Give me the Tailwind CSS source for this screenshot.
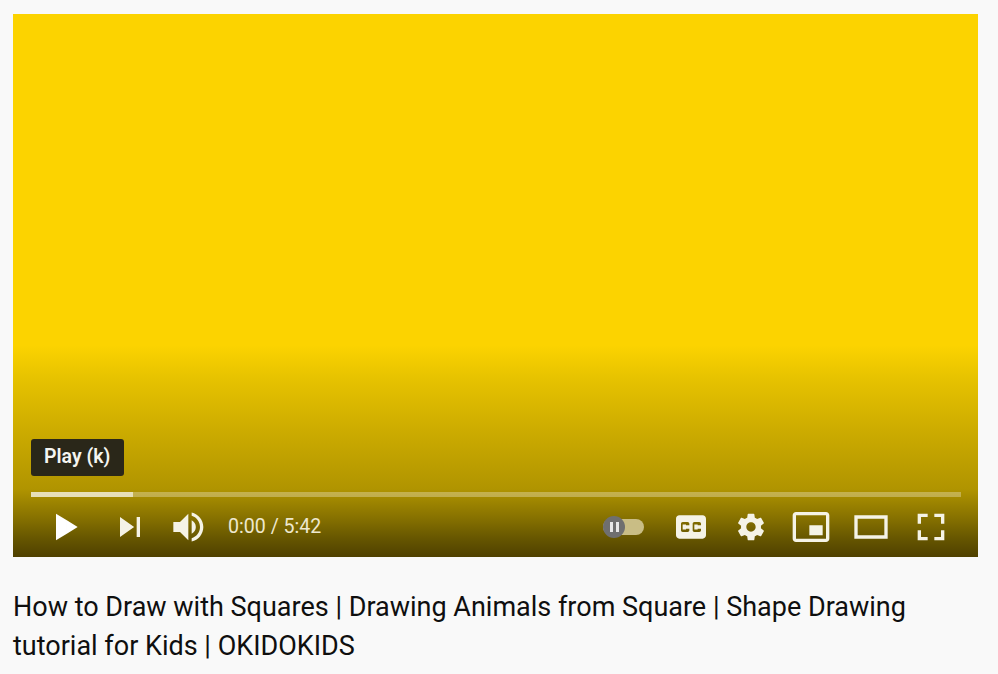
<!DOCTYPE html>
<html lang="en">
<head>
  <meta charset="UTF-8" />
  <title>How to Draw with Squares</title>
  <script src="https://cdn.jsdelivr.net/npm/@tailwindcss/browser@4"></script>
</head>
<body class="bg-[#f9f9f9] text-[#0f0f0f] font-['Roboto',sans-serif] overflow-hidden">
  <main class="w-[998px] h-[674px] pt-[14px] px-[13px]">

    <!-- player -->
    <div class="relative w-[965px] h-[543px] bg-[#fcd300]">
      <div class="absolute inset-x-0 bottom-0 h-[212px] bg-[linear-gradient(to_bottom,#fcd300_0%,#e6c200_16%,#cdac00_40%,#b09400_68%,#857000_82%,#645400_92%,#4f4000_100%)]"></div>

      <div class="absolute left-[18px] top-[425px] h-[37px] w-[93px] pl-[13px] pb-[1px] rounded-[3px] bg-[#2a2719] text-[#f5f5f0] text-[19.5px] font-semibold flex items-center">Play (k)</div>

      <div class="absolute left-[18px] right-[17px] bottom-0">
        <div class="h-[5px] bg-white/30">
          <div class="h-full w-[102px] bg-white/60"></div>
        </div>
        <div class="h-[60px] flex items-center justify-between text-[#f5f3e6]">
          <div class="flex items-center pl-[5px]">
            <svg class="w-[60px] h-[60px] fill-white" viewBox="0 0 36 36"><path d="M12,26 18.5,22 18.5,14 12,10 z M18.5,22 25,18 25,18 18.5,14 z" /></svg>
            <svg class="w-[60px] h-[60px] ml-1 fill-current" viewBox="0 0 36 36"><path d="M12,24 20.5,18 12,12 V24 z M22,12 v12 h2 V12 h-2 z" /></svg>
            <svg class="w-[60px] h-[60px] fill-current" viewBox="0 0 36 36"><path d="M8,21 L12,21 L17,26 L17,10 L12,15 L8,15 L8,21 Z M19,14 L19,22 C20.48,21.32 21.5,19.77 21.5,18 C21.5,16.26 20.48,14.74 19,14 ZM19,11.29 C21.89,12.15 24,14.83 24,18 C24,21.17 21.89,23.85 19,24.71 L19,26.77 C23.01,25.86 26,22.28 26,18 C26,13.72 23.01,10.14 19,9.23 L19,11.29 Z" /></svg>
            <span class="ml-[8px] text-[19.6px] text-[#eee8cf]">0:00 / 5:42</span>
          </div>
          <div class="flex items-center">
            <!-- autoplay toggle -->
            <div class="relative w-[41px] h-[16px] mr-[17px] rounded-full bg-[#c9bd85]">
              <div class="absolute left-0 -top-[3px] w-[22px] h-[22px] rounded-full bg-[#6f6f6f] flex items-center justify-center gap-[3px]">
                <span class="w-[3px] h-[10px] bg-[#e8e8e8]"></span>
                <span class="w-[3px] h-[10px] bg-[#e8e8e8]"></span>
              </div>
            </div>
            <svg class="w-[60px] h-[60px] fill-current" fill-rule="evenodd" viewBox="0 0 36 36"><path d="M11,11 C9.89,11 9,11.9 9,13 L9,23 C9,24.1 9.89,25 11,25 L25,25 C26.1,25 27,24.1 27,23 L27,13 C27,11.9 26.1,11 25,11 L11,11 Z M17,17 L15,17 L15,16.5 L13,16.5 L13,19.5 L15,19.5 L15,19 L17,19 L17,20 C17,20.55 16.55,21 16,21 L13,21 C12.45,21 12,20.55 12,20 L12,16 C12,15.45 12.45,15 13,15 L16,15 C16.55,15 17,15.45 17,16 L17,17 Z M24,17 L22,17 L22,16.5 L20,16.5 L20,19.5 L22,19.5 L22,19 L24,19 L24,20 C24,20.55 23.55,21 23,21 L20,21 C19.45,21 19,20.55 19,20 L19,16 C19,15.45 19.45,15 20,15 L23,15 C23.55,15 24,15.45 24,16 L24,17 Z" /></svg>
            <svg class="w-[60px] h-[60px] fill-current" viewBox="0 0 36 36"><path d="m23.94,18.78 c.03,-0.25 .05,-0.51 .05,-0.78 0,-0.27 -0.02,-0.52 -0.05,-0.78 l1.68,-1.32 c.15,-0.12 .19,-0.33 .09,-0.51 l-1.6,-2.76 c-0.09,-0.17 -0.31,-0.24 -0.48,-0.17 l-1.99,.8 c-0.41,-0.32 -0.86,-0.58 -1.35,-0.78 l-0.30,-2.12 c-0.02,-0.19 -0.19,-0.33 -0.39,-0.33 l-3.2,0 c-0.2,0 -0.36,.14 -0.39,.33 l-0.30,2.12 c-0.48,.2 -0.93,.47 -1.35,.78 l-1.99,-0.8 c-0.18,-0.07 -0.39,0 -0.48,.17 l-1.6,2.76 c-0.10,.17 -0.05,.39 .09,.51 l1.68,1.32 c-0.03,.25 -0.05,.52 -0.05,.78 0,.26 .02,.52 .05,.78 l-1.68,1.32 c-0.15,.12 -0.19,.33 -0.09,.51 l1.6,2.76 c.09,.17 .31,.24 .48,.17 l1.99,-0.8 c.41,.32 .86,.58 1.35,.78 l.30,2.12 c.02,.19 .19,.33 .39,.33 l3.2,0 c.2,0 .36,-0.14 .39,-0.33 l.30,-2.12 c.48,-0.2 .93,-0.47 1.35,-0.78 l1.99,.8 c.18,.07 .39,0 .48,-0.17 l1.6,-2.76 c.09,-0.17 .05,-0.39 -0.09,-0.51 l-1.68,-1.32 0,0 z m-5.94,2.01 c-1.54,0 -2.8,-1.25 -2.8,-2.8 0,-1.54 1.25,-2.8 2.8,-2.8 1.54,0 2.8,1.25 2.8,2.8 0,1.54 -1.25,2.8 -2.8,2.8 l0,0 z" /></svg>
            <svg class="w-[60px] h-[60px] fill-current" viewBox="0 0 36 36"><path d="M25,17 L17,17 L17,23 L25,23 L25,17 L25,17 Z M29,25 L29,10.98 C29,9.88 28.1,9 27,9 L9,9 C7.9,9 7,9.88 7,10.98 L7,25 C7,26.1 7.9,27 9,27 L27,27 C28.1,27 29,26.1 29,25 L29,25 Z M27,25.02 L9,25.02 L9,10.97 L27,10.97 L27,25.02 L27,25.02 Z" /></svg>
            <svg class="w-[60px] h-[60px] fill-current" fill-rule="evenodd" viewBox="0 0 36 36"><path d="m28,11 0,14 -20,0 0,-14 z m-18,2 16,0 0,10 -16,0 0,-10 z" /></svg>
            <svg class="w-[60px] h-[60px] fill-current" viewBox="0 0 36 36"><path d="m10,16 2,0 0,-4 4,0 0,-2 L10,10 l0,6 0,0 z" /><path d="m20,10 0,2 4,0 0,4 2,0 L26,10 l-6,0 0,0 z" /><path d="m24,24 -4,0 0,2 L26,26 l0,-6 -2,0 0,4 0,0 z" /><path d="M12,20 10,20 10,26 l6,0 0,-2 -4,0 0,-4 0,0 z" /></svg>
          </div>
        </div>
      </div>
    </div>

    <h1 class="mt-[31px] text-[27px] leading-[39px] font-normal">How to Draw with Squares | Drawing Animals from Square | Shape Drawing tutorial for Kids | OKIDOKIDS</h1>
  </main>
</body>
</html>
